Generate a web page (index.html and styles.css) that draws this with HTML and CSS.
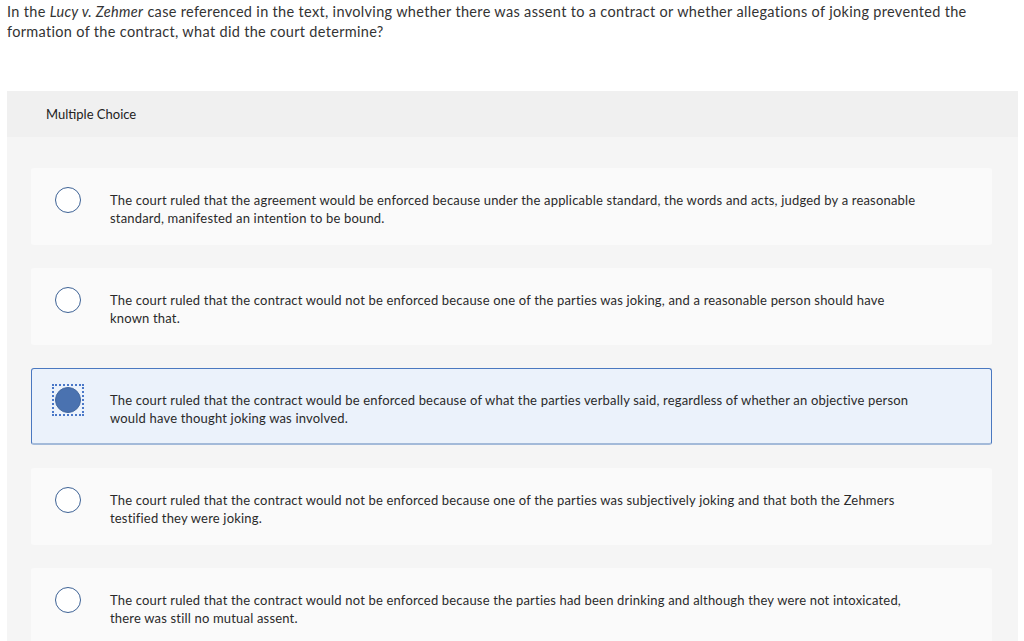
FILE: index.html
```html
<!DOCTYPE html>
<html>
<head>
<meta charset="utf-8">
<link rel="stylesheet" href="styles.css">
</head>
<body>
<div class="page">
  <p class="question">In the <i>Lucy v. Zehmer</i> case referenced in the text, involving whether there was assent to a contract or whether allegations of joking prevented the formation of the contract, what did the court determine?</p>
  <div class="mc">
    <div class="mc-head">Multiple Choice</div>
    <div class="mc-body">
      <div class="opt">
        <span class="radio-wrap"><span class="radio"></span></span>
        <span class="opt-text">The court ruled that the agreement would be enforced because under the applicable standard, the words and acts, judged by a reasonable standard, manifested an intention to be bound.</span>
      </div>
      <div class="opt">
        <span class="radio-wrap"><span class="radio"></span></span>
        <span class="opt-text">The court ruled that the contract would not be enforced because one of the parties was joking, and a reasonable person should have known that.</span>
      </div>
      <div class="opt selected">
        <span class="radio-wrap focus"><span class="radio checked"></span></span>
        <span class="opt-text">The court ruled that the contract would be enforced because of what the parties verbally said, regardless of whether an objective person would have thought joking was involved.</span>
      </div>
      <div class="opt">
        <span class="radio-wrap"><span class="radio"></span></span>
        <span class="opt-text">The court ruled that the contract would not be enforced because one of the parties was subjectively joking and that both the Zehmers testified they were joking.</span>
      </div>
      <div class="opt">
        <span class="radio-wrap"><span class="radio"></span></span>
        <span class="opt-text">The court ruled that the contract would not be enforced because the parties had been drinking and although they were not intoxicated, there was still no mutual assent.</span>
      </div>
    </div>
  </div>
</div>
</body>
</html>
```

FILE: styles.css
```css
html, body {
  margin: 0;
  padding: 0;
  background: #ffffff;
}
body {
  font-family: "Lato", "Liberation Sans", sans-serif;
  color: #333333;
  overflow: hidden;
}
.page {
  padding: 2px 6px 0 7px;
}
.question {
  margin: 0;
  font-size: 14.5px;
  line-height: 20px;
  letter-spacing: 0.32px;
  max-width: 990px;
}
.mc {
  margin-top: 49px;
  background: #f5f5f5;
}
.mc-head {
  background: #f0f0f0;
  height: 46px;
  padding-left: 39px;
  font-size: 13px;
  line-height: 46px;
  color: #222;
}
.mc-body {
  padding: 31px 26px 20px 24px;
  display: flex;
  flex-direction: column;
  gap: 23px;
}
.opt {
  background: #fafafa;
  border-radius: 3px;
  border: 1px solid transparent;
  box-sizing: border-box;
  height: 77px;
  display: flex;
  align-items: flex-start;
  padding: 18px 74px 0 23px;
}
.opt.selected {
  background: #ebf2fb;
  border: 1px solid #4a78c0;
  border-bottom: 2px solid #a3bad9;
}
.radio-wrap {
  flex: none;
  width: 26px;
  height: 26px;
  margin-right: 29px;
  display: block;
}
.radio-wrap.focus {
  outline: 2px dotted #4a78c8;
  outline-offset: 1px;
}
.radio {
  display: block;
  width: 26px;
  height: 26px;
  border-radius: 50%;
  border: 1.5px solid #3d6295;
  box-sizing: border-box;
  background: #ffffff;
}
.radio.checked {
  background: #4a72b0;
  border-color: #41679f;
}
.opt-text {
  font-size: 13px;
  line-height: 18px;
  letter-spacing: 0.18px;
  padding-top: 4px;
  color: #2a2a2a;
}
```
